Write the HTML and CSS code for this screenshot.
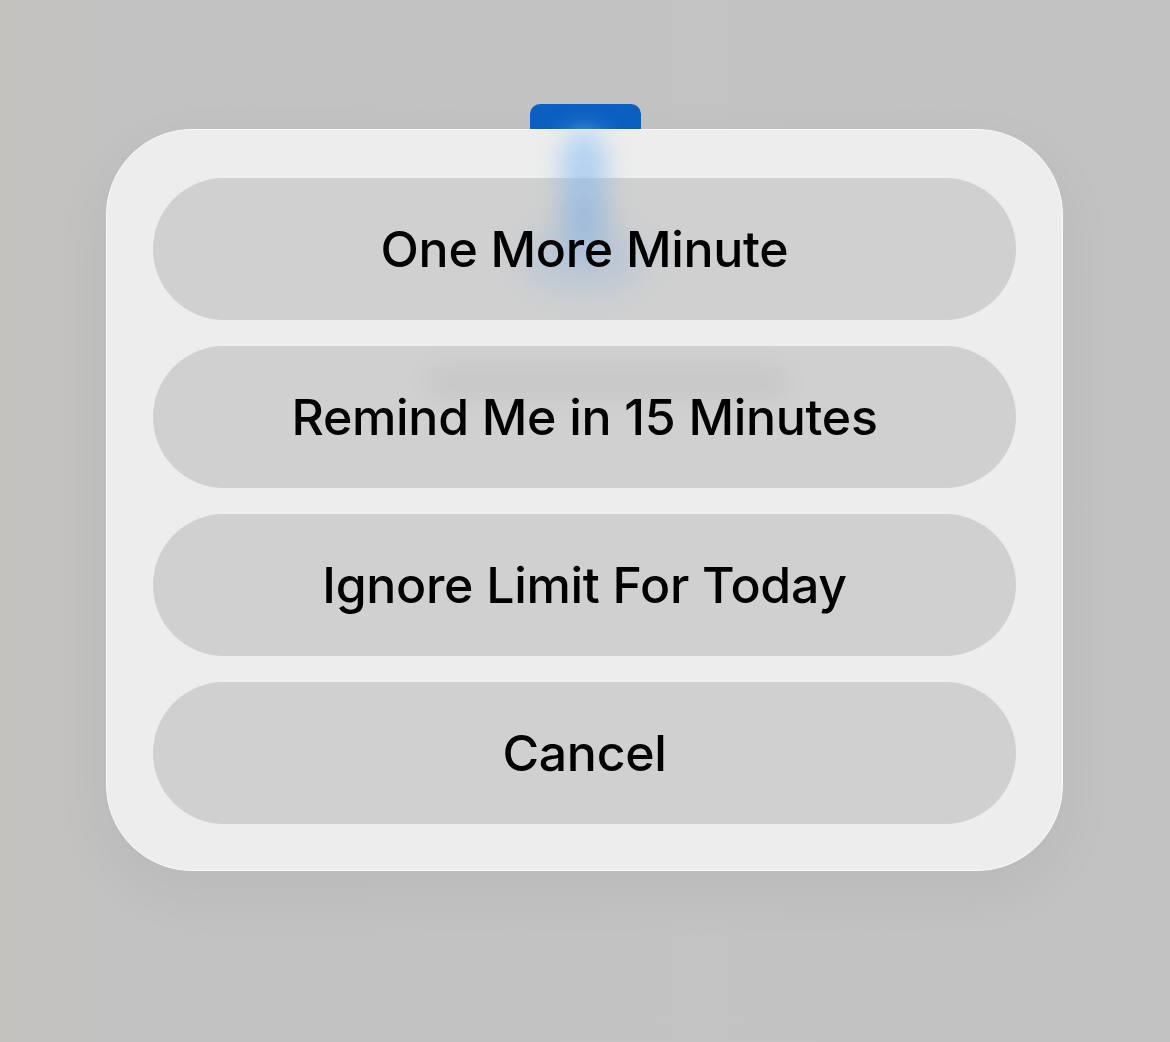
FILE: index.html
```html
<!DOCTYPE html>
<html lang="en">
<head>
<meta charset="UTF-8" />
<meta name="viewport" content="width=device-width, initial-scale=1" />
<title>Time Limit</title>
<link rel="stylesheet" href="styles.css">
</head>
<body>

<div class="stage">
  <div class="tab"></div>
  <div class="sheet">
    <div class="glow"></div>
    <div class="glow-foot"></div>
    <div class="smudge"></div>
    <button type="button" class="action"><span>One More Minute</span></button>
    <button type="button" class="action"><span>Remind Me in 15 Minutes</span></button>
    <button type="button" class="action"><span>Ignore Limit For Today</span></button>
    <button type="button" class="action"><span>Cancel</span></button>
  </div>
</div>

</body>
</html>
```

FILE: styles.css
```css
body {
  margin: 0;
  height: 100vh;
  overflow: hidden;
  font-family: Inter, "Open Sans", sans-serif;
  background: linear-gradient(90deg, #c4c2bf 0%, #c2c2c2 10%, #c3c3c3 60%, #c2c2c2 100%);
}
.stage {
  position: relative;
  padding: 129px 0 0 106px;
}
.tab {
  position: absolute;
  left: 530px;
  top: 104px;
  width: 111px;
  height: 30px;
  background: #0b60c2;
  border-radius: 10px 10px 0 0;
}
.sheet {
  position: relative;
  width: 957px;
  box-sizing: border-box;
  padding: 48px 46px 46px;
  display: flex;
  flex-direction: column;
  gap: 26px;
  background: #ededed;
  border: 1px solid #fafafa;
  border-radius: 86px;
  box-shadow: 0 20px 60px rgba(0, 0, 0, 0.05);
}
.action {
  height: 142px;
  border: none;
  border-radius: 71px;
  background: #d0d0d0;
  color: #000;
  font-family: inherit;
  font-size: 50px;
  font-weight: 500;
  letter-spacing: -0.3px;
  cursor: pointer;
}
.action span {
  position: relative;
  z-index: 2;
}
/* soft blue light spilling down from the tab */
.glow {
  position: absolute;
  left: 455px;
  top: 0;
  width: 44px;
  height: 130px;
  background: linear-gradient(180deg, rgba(160, 205, 250, 0.7) 0%, rgba(120, 170, 225, 0.55) 70%, rgba(130, 175, 225, 0.3) 100%);
  border-radius: 22px;
  filter: blur(12px);
  z-index: 1;
  pointer-events: none;
}
.glow-foot {
  position: absolute;
  left: 415px;
  top: 100px;
  width: 125px;
  height: 60px;
  background: rgba(140, 180, 230, 0.3);
  border-radius: 50%;
  filter: blur(16px);
  z-index: 1;
  pointer-events: none;
}
/* faint shade across the top of the second button */
.smudge {
  position: absolute;
  left: 320px;
  top: 238px;
  width: 360px;
  height: 28px;
  background: rgba(0, 0, 0, 0.045);
  border-radius: 14px;
  filter: blur(12px);
  z-index: 1;
  pointer-events: none;
}
```
